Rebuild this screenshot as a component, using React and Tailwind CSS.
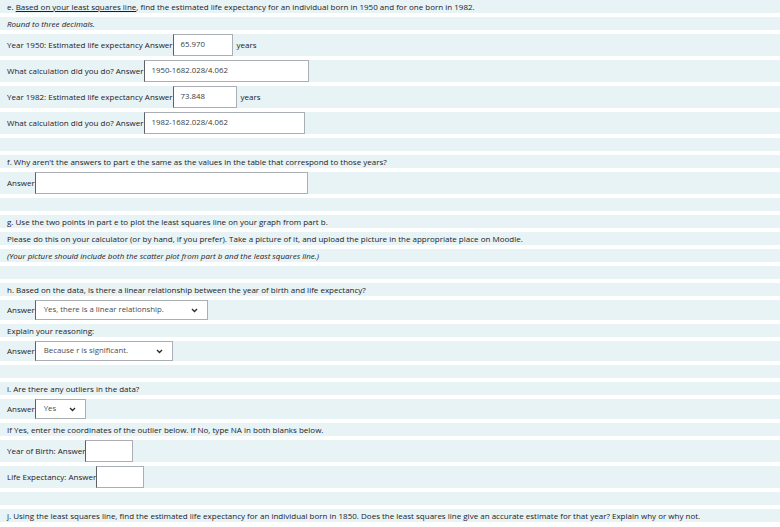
import React from 'react'

const font = { fontFamily: '"Open Sans", "Noto Sans", sans-serif' }

function Row({ children, tall, mid }) {
  const h = tall ? 'h-[22px]' : mid ? 'h-[20px]' : 'h-[13px]'
  return (
    <div className={`${h} bg-[#e7f3f5] pl-[7px] flex items-center text-[8px] text-[#1d2125] whitespace-nowrap`}>
      {children}
    </div>
  )
}

function Field({ value, w, h = 'h-[22px]' }) {
  return (
    <div className={`${w} ${h} bg-white border border-[#a9afb5] border-l-[#5d6166] flex items-center pl-[7px] text-[7.8px] text-[#3a3d40]`}>
      {value}
    </div>
  )
}

function Select({ value, w }) {
  return (
    <div className={`${w} h-[20px] bg-white border border-[#a9afb5] border-l-[#5d6166] flex items-center justify-between pl-[8px] pr-[9px] text-[7.8px] text-[#494c50]`}>
      <span>{value}</span>
      <svg width="7" height="5" viewBox="0 0 7 5" fill="none">
        <path d="M1 1l2.5 2.5L6 1" stroke="#2a2d30" strokeWidth="1.4" />
      </svg>
    </div>
  )
}

export default function App() {
  return (
    <div className="w-[780px] h-[527px] bg-white overflow-hidden flex flex-col gap-[4px]" style={font}>
      <Row>
        e.&nbsp;<span className="underline">Based on your least squares line</span>, find the estimated life expectancy for an individual born in 1950 and for one born in 1982.
      </Row>
      <Row><span className="italic">Round to three decimals.</span></Row>
      <Row tall>
        Year 1950: Estimated life expectancy Answer
        <Field value="65.970" w="w-[60px]" />
        <span className="ml-[4px]">years</span>
      </Row>
      <Row tall>
        What calculation did you do? Answer
        <Field value="1950-1682.028/4.062" w="w-[165px]" />
      </Row>
      <Row tall>
        Year 1982: Estimated life expectancy Answer
        <Field value="73.848" w="w-[64px]" />
        <span className="ml-[4px]">years</span>
      </Row>
      <Row tall>
        What calculation did you do? Answer
        <Field value="1982-1682.028/4.062" w="w-[161px]" />
      </Row>
      <Row />
      <Row>f. Why aren't the answers to part e the same as the values in the table that correspond to those years?</Row>
      <Row tall>
        Answer
        <Field value="" w="w-[273px]" h="h-[22px]" />
      </Row>
      <Row />
      <Row>g. Use the two points in part e to plot the least squares line on your graph from part b.</Row>
      <Row>Please do this on your calculator (or by hand, if you prefer). Take a picture of it, and upload the picture in the appropriate place on Moodle.</Row>
      <Row><span className="italic">(Your picture should include both the scatter plot from part b and the least squares line.)</span></Row>
      <Row />
      <Row>h. Based on the data, is there a linear relationship between the year of birth and life expectancy?</Row>
      <Row mid>
        Answer
        <Select value="Yes, there is a linear relationship." w="w-[173px]" />
      </Row>
      <Row>Explain your reasoning:</Row>
      <Row mid>
        Answer
        <Select value="Because r is significant." w="w-[138px]" />
      </Row>
      <Row />
      <Row>i. Are there any outliers in the data?</Row>
      <Row mid>
        Answer
        <Select value="Yes" w="w-[51px]" />
      </Row>
      <Row>If Yes, enter the coordinates of the outlier below. If No, type NA in both blanks below.</Row>
      <Row tall>
        Year of Birth: Answer
        <Field value="" w="w-[48px]" />
      </Row>
      <Row tall>
        Life Expectancy: Answer
        <Field value="" w="w-[48px]" />
      </Row>
      <Row />
      <Row>j. Using the least squares line, find the estimated life expectancy for an individual born in 1850. Does the least squares line give an accurate estimate for that year? Explain why or why not.</Row>
    </div>
  )
}
